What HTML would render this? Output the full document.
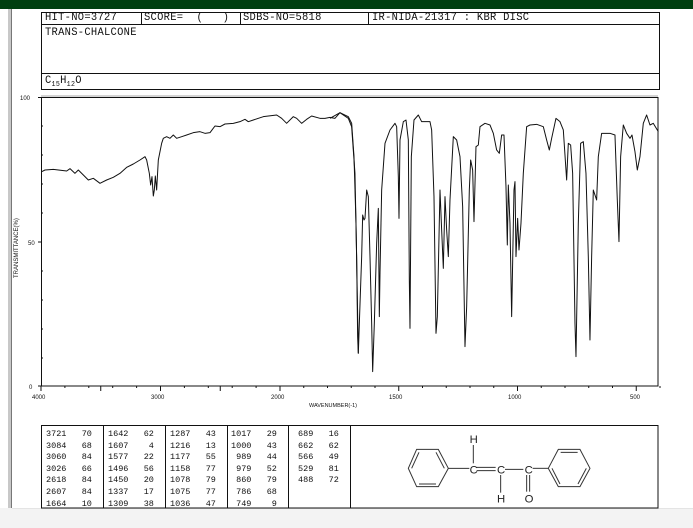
<!DOCTYPE html>
<html><head><meta charset="utf-8"><style>
body{margin:0;width:693px;height:528px;background:#fff;position:relative;overflow:hidden;font-family:"Liberation Mono",monospace;}
.a{position:absolute}
.t{font-size:11px;color:#111;line-height:11px;white-space:pre;letter-spacing:0.3px;transform:scaleX(0.95);transform-origin:left}
</style></head><body>
<div class="a" style="left:0;top:0;width:693px;height:9px;background:#003f10"></div>
<div class="a" style="left:8px;top:9px;width:3px;height:519px;background:#c8c8c8"></div>
<div class="a" style="left:11px;top:9px;width:1px;height:519px;background:#777"></div>
<div class="a" style="left:0;top:508px;width:693px;height:20px;background:#f3f3f3"></div>
<div class="a" style="left:12px;top:508px;width:681px;height:1px;background:#e4e4e4"></div>

<!-- header -->
<div class="a" style="left:41px;top:12px;width:617px;height:76px;border:1px solid #111"></div>
<div class="a" style="left:41px;top:24px;width:618px;height:1px;background:#111"></div>
<div class="a" style="left:41px;top:73px;width:618px;height:1px;background:#111"></div>
<div class="a" style="left:141px;top:12px;width:1px;height:12px;background:#111"></div>
<div class="a" style="left:240px;top:12px;width:1px;height:12px;background:#111"></div>
<div class="a" style="left:368px;top:12px;width:1px;height:12px;background:#111"></div>
<div class="a t" style="left:45px;top:13px">HIT-NO=3727</div>
<div class="a t" style="left:144px;top:13px">SCORE=  (   )</div>
<div class="a t" style="left:243px;top:13px">SDBS-NO=5818</div>
<div class="a t" style="left:372px;top:13px">IR-NIDA-21317 : KBR DISC</div>
<div class="a t" style="left:45px;top:28px">TRANS-CHALCONE</div>
<div class="a t" style="left:45px;top:76px">C<span style="font-size:7px;vertical-align:-3px">15</span>H<span style="font-size:7px;vertical-align:-3px">12</span>O</div>

<svg class="a" style="left:0;top:0" width="693" height="528">
<g font-family="Liberation Sans,sans-serif" font-size="6" fill="#111">
<text x="20" y="100">100</text><text x="28" y="245">50</text><text x="29" y="389">0</text>
<text x="32" y="399">4000</text><text x="151" y="399">3000</text><text x="271" y="399">2000</text><text x="389" y="399">1500</text><text x="508" y="399">1000</text><text x="630" y="399">500</text>
<text x="309" y="407" font-size="5.5">WAVENUMBER(-1)</text>
<text transform="translate(18,278) rotate(-90)" font-size="6">TRANSMITTANCE(%)</text>
</g>
<line x1="41" y1="96" x2="658" y2="96" stroke="#aaa" stroke-width="1"/>
<rect x="41.5" y="97.5" width="616.5" height="288.5" fill="none" stroke="#111" stroke-width="1"/>
<g stroke="#111" stroke-width="1">
<line x1="38" y1="97.5" x2="41" y2="97.5"/><line x1="38" y1="242" x2="41" y2="242"/><line x1="38" y1="386" x2="41" y2="386"/>
<line x1="41" y1="126" x2="43" y2="126"/><line x1="41" y1="155" x2="43" y2="155"/><line x1="41" y1="184" x2="43" y2="184"/><line x1="41" y1="213" x2="43" y2="213"/><line x1="41" y1="271" x2="43" y2="271"/><line x1="41" y1="300" x2="43" y2="300"/><line x1="41" y1="329" x2="43" y2="329"/><line x1="41" y1="358" x2="43" y2="358"/>
</g>
<g stroke="#111" stroke-width="1" id="ticks"></g>
<g transform="translate(0,90) scale(0.3333)">
<polyline fill="none" stroke="#111" stroke-width="3" stroke-linejoin="round" points="125,245 135,240 160,238 200,243 210,236 225,250 235,240 250,255 265,270 280,265 300,280 320,270 340,262 360,250 380,232 400,222 420,210 435,200 440,210 448,250 452,285 456,260 460,318 463,300 466,258 470,300 475,210 485,160 490,145 500,140 510,145 520,135 530,145 545,140 560,135 580,128 600,125 615,130 630,128 645,108 660,110 675,102 700,100 720,95 735,88 745,95 760,90 790,80 830,75 845,85 860,100 880,80 890,85 905,100 920,88 935,78 960,85 975,85 990,82 1005,85 1020,68 1030,75 1045,85 1055,110 1065,250 1070,500 1073,740 1075,790"/>
</g>
<g transform="translate(330,90) scale(0.3333)">
<polyline fill="none" stroke="#111" stroke-width="3" stroke-linejoin="round" points="0,85 30,68 55,80 65,100 72,200 78,400 85,790 88,700 95,500 98,375 102,390 105,385 110,300 115,320 120,500 125,700 128,845 133,700 140,460 145,355 148,680 150,550 155,300 165,160 180,120 195,100 200,110 205,260 207,385 210,150 220,95 228,90 235,150 238,570 240,715 244,200 252,90 265,75 275,95 300,95 305,120 312,320 318,730 322,680 330,300 335,420 340,535 345,320 350,420 355,500 360,330 370,140 380,150 390,200 398,350 405,770 410,650 418,300 422,210 428,240 432,395 438,170 445,165 450,110 465,100 480,105 490,130 500,180 508,190 515,135 522,135 528,290 532,465 535,285 540,400 545,680 552,300 555,275 558,500 563,385 567,480 573,400 580,250 590,110 600,105 620,103 640,110 650,150 658,180 665,145 678,85 690,95 700,120 710,270 715,160 722,165 728,250 735,700 738,800 745,400 752,160 760,155 768,250 775,500 780,750 785,500 790,300 800,330 805,200 815,130 840,130 855,135 862,330 867,455 872,200 880,105 890,130 900,145 906,135 915,185 922,240 930,200 940,100 950,75 960,105 970,100 985,125"/>
</g>

<!-- table -->
<rect x="41.5" y="425.5" width="616.5" height="82.5" fill="none" stroke="#111"/>
<g stroke="#111"><line x1="103.5" y1="425" x2="103.5" y2="508"/><line x1="165.5" y1="425" x2="165.5" y2="508"/><line x1="227.5" y1="425" x2="227.5" y2="508"/><line x1="288.5" y1="425" x2="288.5" y2="508"/><line x1="350.5" y1="425" x2="350.5" y2="508"/></g>

<g transform="translate(350,420) scale(0.3333)" stroke="#333" stroke-width="3" fill="none">
<polygon points="175,145 200,88 265,88 295,145 265,200 200,200"/>
<polyline points="185,145 207,97"/><polyline points="258,97 283,145"/><polyline points="207,192 258,192"/>
<line x1="295" y1="145" x2="358" y2="145"/>
<line x1="380" y1="142" x2="437" y2="142"/><line x1="380" y1="152" x2="437" y2="152"/>
<line x1="370" y1="75" x2="370" y2="130"/>
<line x1="452" y1="165" x2="452" y2="218"/>
<line x1="465" y1="148" x2="520" y2="148"/>
<line x1="530" y1="165" x2="530" y2="215"/><line x1="539" y1="165" x2="539" y2="215"/>
<line x1="548" y1="145" x2="595" y2="145"/>
<polygon points="595,145 625,88 690,88 720,145 690,200 625,200"/>
<polyline points="632,97 683,97"/><polyline points="709,145 684,192"/><polyline points="606,145 630,192"/>
<g fill="#222" stroke="none" font-family="Liberation Sans,sans-serif" font-size="34">
<text x="359" y="69">H</text><text x="359" y="160">C</text><text x="441" y="160">C</text><text x="524" y="160">C</text><text x="441" y="248">H</text><text x="524" y="248">O</text>
</g>
</g>
</svg>

<div class="a" style="left:46px;top:429px;font-size:8.5px;line-height:11.6px;white-space:pre;color:#111">3721   70
3084   68
3060   84
3026   66
2618   84
2607   84
1664   10</div>
<div class="a" style="left:108px;top:429px;font-size:8.5px;line-height:11.6px;white-space:pre;color:#111">1642   62
1607    4
1577   22
1496   56
1450   20
1337   17
1309   38</div>
<div class="a" style="left:170px;top:429px;font-size:8.5px;line-height:11.6px;white-space:pre;color:#111">1287   43
1216   13
1177   55
1158   77
1078   79
1075   77
1036   47</div>
<div class="a" style="left:231px;top:429px;font-size:8.5px;line-height:11.6px;white-space:pre;color:#111">1017   29
1000   43
 989   44
 979   52
 860   79
 786   68
 749    9</div>
<div class="a" style="left:298px;top:429px;font-size:8.5px;line-height:11.6px;white-space:pre;color:#111">689   16
662   62
566   49
529   81
488   72</div>
<script>
var g=document.getElementById('ticks'),s='';
for(var v=4000;v>=400;v-=100){var x=v>=2000?41+(4000-v)*0.1195:280+(2000-v)*0.2375;var h=(v%500==0)?5:2;if(v>=2000&&v%500!=0&&v%200!=0)continue;if(v<2000&&v%100!=0)continue;s+='<line x1="'+x+'" y1="386" x2="'+x+'" y2="'+(386+h)+'"/>';}
g.innerHTML=s;
</script>
</body></html>
